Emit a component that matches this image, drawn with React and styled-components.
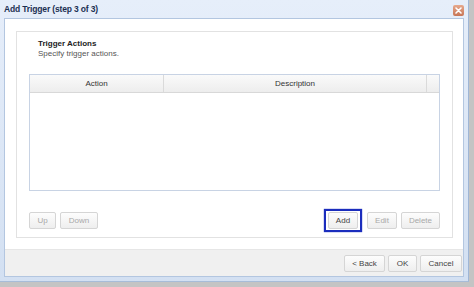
import styled, { createGlobalStyle } from 'styled-components';

const Global = createGlobalStyle`
  html, body {
    margin: 0;
    padding: 0;
    background: #c4c4c4;
    font-family: "Liberation Sans", Arial, sans-serif;
  }
`

const Window = styled.div`
  width: 469px;
  height: 282px;
  box-sizing: border-box;
  background: linear-gradient(#e6eefa, #d3e0f2);
  border-right: 1px solid #9fb6d6;
  border-bottom: 1px solid #a7bcd8;
  display: flex;
  flex-direction: column;
  padding: 0 4px 4px 4px;
`

const TitleBar = styled.div`
  height: 18px;
  flex: 0 0 18px;
  display: flex;
  align-items: center;
  justify-content: space-between;
`

const Title = styled.div`
  font-size: 8.5px;
  font-weight: bold;
  color: #1b2f52;
  letter-spacing: -0.15px;
`

const Close = styled.div`
  width: 11px;
  height: 11px;
  margin-top: 2px;
  border-radius: 2px;
  background: linear-gradient(#e6a88c, #c77556);
  display: flex;
  align-items: center;
  justify-content: center;
`

const Body = styled.div`
  flex: 1;
  background: #fff;
  border: 1px solid #b3c6e0;
  display: flex;
  flex-direction: column;
`

const Content = styled.div`
  flex: 1;
  padding: 12px 10px 11px 11px;
  display: flex;
`

const Panel = styled.div`
  flex: 1;
  border: 1px solid #e2e2e2;
  display: flex;
  flex-direction: column;
  padding: 7px 12px 8px 12px;
`

const Heading = styled.div`
  padding-left: 9px;
  font-size: 8px;
  font-weight: bold;
  color: #222;
  line-height: 10px;
`

const Sub = styled.div`
  padding-left: 9px;
  font-size: 8px;
  color: #555;
  line-height: 10px;
`

const Grid = styled.div`
  margin-top: 15px;
  height: 115px;
  border: 1px solid #c8d3e4;
  display: flex;
  flex-direction: column;
`

const GridHead = styled.div`
  height: 17px;
  display: flex;
  background: linear-gradient(#fafafa, #ededed);
  border-bottom: 1px solid #d8d8d8;
`

const HeadCell = styled.div`
  flex: ${p => p.$w ? `0 0 ${p.$w}px` : '1'};
  display: flex;
  align-items: center;
  justify-content: center;
  font-size: 8px;
  color: #333;
  border-right: ${p => p.$last ? 'none' : '1px solid #dadada'};
`

const ButtonRow = styled.div`
  margin-top: auto;
  display: flex;
  align-items: center;
  gap: 4px;
`

const Spacer = styled.div`
  flex: 1;
`

const Button = styled.div`
  height: 17px;
  box-sizing: border-box;
  padding: 0 7px;
  min-width: ${p => p.$min || 0}px;
  border: 1px solid #d5d5d5;
  border-radius: 2px;
  background: linear-gradient(#fdfdfd, #eeeeee);
  display: flex;
  align-items: center;
  justify-content: center;
  font-size: 8px;
  color: ${p => p.$disabled ? '#a8a8a8' : '#444'};
`

const Focus = styled.div`
  border: 2px solid #1b2dbd;
  padding: 1px 2px;
  box-shadow: 0 0 1px #1b2dbd;
  margin: -4px 1px -4px 0;
`

const Footer = styled.div`
  height: 26px;
  flex: 0 0 26px;
  background: #f0f0f0;
  border-top: 1px solid #e6e6e6;
  display: flex;
  align-items: center;
  justify-content: flex-end;
  gap: 3px;
  padding-right: 1px;
`

export default function App() {
  return <>
    <Global />
    <Window>
      <TitleBar>
        <Title>Add Trigger (step 3 of 3)</Title>
        <Close>
          <svg width="7" height="7" viewBox="0 0 7 7">
            <path d="M1 1L6 6M6 1L1 6" stroke="#fff" strokeWidth="1.6" strokeLinecap="round" />
          </svg>
        </Close>
      </TitleBar>
      <Body>
        <Content>
          <Panel>
            <Heading>Trigger Actions</Heading>
            <Sub>Specify trigger actions.</Sub>
            <Grid>
              <GridHead>
                <HeadCell $w={133}>Action</HeadCell>
                <HeadCell>Description</HeadCell>
                <HeadCell $w={12} $last />
              </GridHead>
            </Grid>
            <ButtonRow>
              <Button $disabled $min={27}>Up</Button>
              <Button $disabled $min={38}>Down</Button>
              <Spacer />
              <Focus>
                <Button $min={30}>Add</Button>
              </Focus>
              <Button $disabled $min={29}>Edit</Button>
              <Button $disabled $min={39}>Delete</Button>
            </ButtonRow>
          </Panel>
        </Content>
        <Footer>
          <Button $min={41}>&lt; Back</Button>
          <Button $min={29}>OK</Button>
          <Button $min={42}>Cancel</Button>
        </Footer>
      </Body>
    </Window>
  </>
}
